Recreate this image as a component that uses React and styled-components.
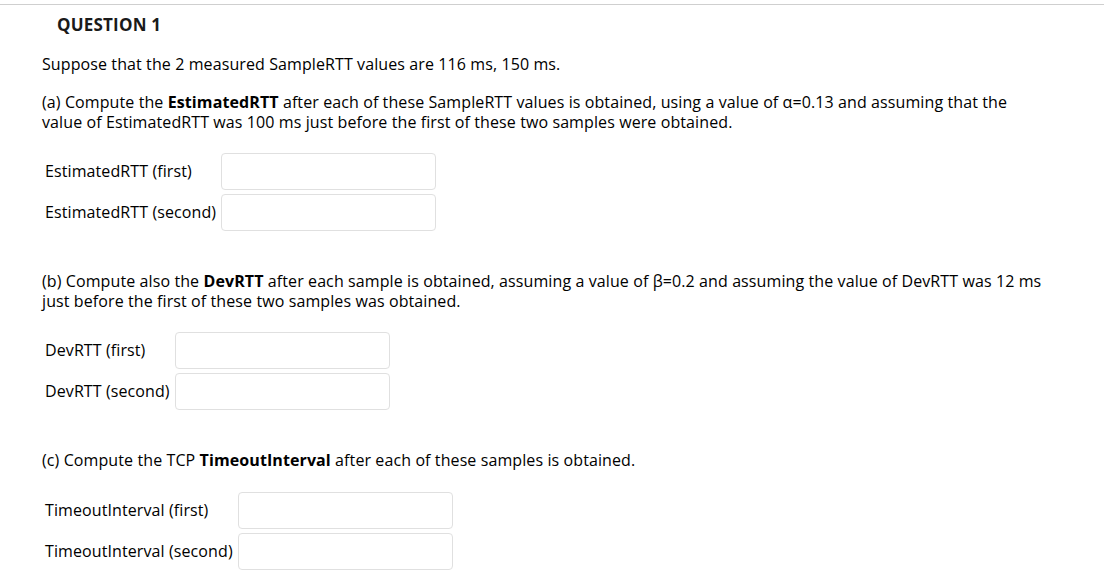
import styled, { createGlobalStyle } from 'styled-components';

const GlobalStyle = createGlobalStyle`
   body {
      margin: 0;
      background: #fff;
      font-family: 'Open Sans', 'Liberation Sans', sans-serif;
      color: #000;
   }
`;

const Page = styled.div`
   padding-top: 4px;
`;

const Rule = styled.div`
   border-top: 1px solid #cfcfcf;
`;

const Heading = styled.h3`
   margin: 10px 0 0 57px;
   font-size: 17px;
   font-weight: 700;
   letter-spacing: 0.2px;
   line-height: 20px;
   color: #1a1a1a;
`;

const Body = styled.div`
   padding: 0 58px 0 42px;
`;

const Para = styled.p`
   margin: ${(p) => p.$top}px 0 0 0;
   font-size: 16px;
   letter-spacing: 0.1px;
   line-height: 19.5px;
`;

const Fields = styled.div`
   display: grid;
   grid-template-columns: max-content 215px;
   column-gap: 5px;
   row-gap: 4px;
   align-items: center;
   margin-top: ${(p) => p.$top}px;
   padding-left: 3px;
`;

const Label = styled.label`
   font-size: 16px;
   letter-spacing: 0.1px;
   line-height: 20px;
   padding-bottom: 1px;
`;

const Input = styled.input`
   box-sizing: border-box;
   width: 215px;
   height: 37px;
   border: 1px solid #e0e0e0;
   border-radius: 4px;
   background: #fff;
   padding: 0 8px;
   font: inherit;
   outline: none;
`;

function FieldGroup({ top, labels }) {
   return (
      <Fields $top={top}>
         {labels.map((l) => [
            <Label key={l}>{l}</Label>,
            <Input key={l + '-input'} type="text" />,
         ])}
      </Fields>
   );
}

export default function App() {
   return (
      <Page>
         <GlobalStyle />
         <Rule />
         <Heading>QUESTION 1</Heading>
         <Body>
            <Para $top={20}>
               Suppose that the 2 measured SampleRTT values are 116 ms, 150 ms.
            </Para>
            <Para $top={18.5}>
               (a) Compute the <b>EstimatedRTT</b> after each of these SampleRTT
               values is obtained, using a value of α=0.13 and assuming that the
               value of EstimatedRTT was 100 ms just before the first of these two
               samples were obtained.
            </Para>
            <FieldGroup
               top={21}
               labels={['EstimatedRTT (first)', 'EstimatedRTT (second)']}
            />
            <Para $top={41}>
               (b) Compute also the <b>DevRTT</b> after each sample is obtained,
               assuming a value of β=0.2 and assuming the value of DevRTT was 12 ms
               just before the first of these two samples was obtained.
            </Para>
            <FieldGroup top={21} labels={['DevRTT (first)', 'DevRTT (second)']} />
            <Para $top={41}>
               (c) Compute the TCP <b>TimeoutInterval</b> after each of these
               samples is obtained.
            </Para>
            <FieldGroup
               top={21}
               labels={['TimeoutInterval (first)', 'TimeoutInterval (second)']}
            />
         </Body>
      </Page>
   );
}
